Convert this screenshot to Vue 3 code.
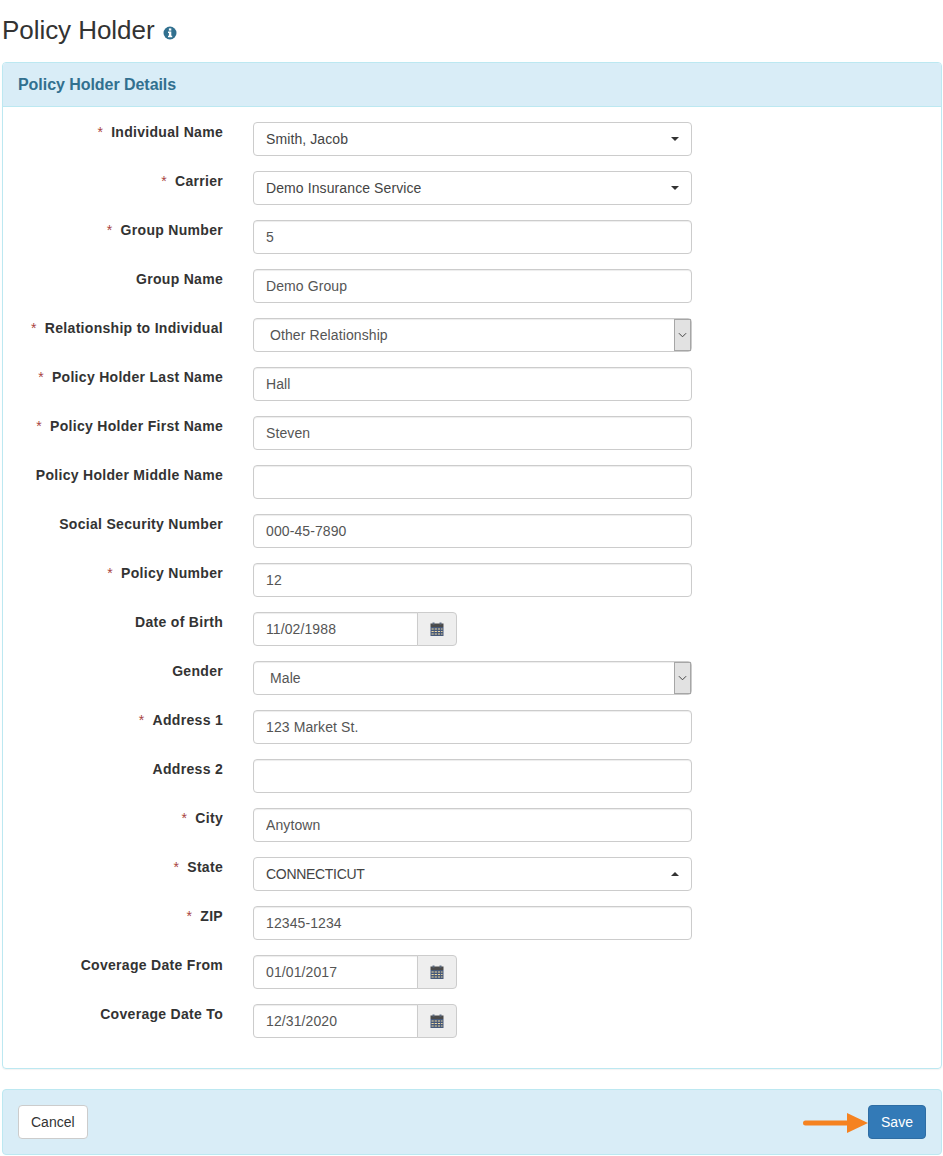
<template>
  <div class="page">
    <h3 class="title">
      Policy Holder
      <svg class="info" viewBox="0 0 14 14" width="14" height="14">
        <circle cx="7" cy="7" r="6.5" fill="#31708f" />
        <rect x="5.9" y="2.4" width="2.4" height="2.2" fill="#fff" />
        <path d="M5 5.6h3.3v4.2h.9v1.4H5V9.8h.9V7H5z" fill="#fff" />
      </svg>
    </h3>

    <div class="panel">
      <div class="panel-heading">Policy Holder Details</div>
      <div class="panel-body">
        <div v-for="field in fields" :key="field.label" class="form-row">
          <label class="form-label">
            <span v-if="field.required" class="req">*</span>{{ field.label }}
          </label>

          <div v-if="field.type === 'combo'" class="control combo">
            <span :class="{ caps: field.open }">{{ field.value }}</span>
            <i class="caret" :class="{ up: field.open }"></i>
          </div>

          <div v-else-if="field.type === 'select'" class="control native">
            <span>{{ field.value }}</span>
            <span class="native-btn">
              <svg viewBox="0 0 10 6" width="9" height="6">
                <path d="M1 1l4 4 4-4" fill="none" stroke="#444" stroke-width="1.1" />
              </svg>
            </span>
          </div>

          <div v-else-if="field.type === 'date'" class="date-group">
            <input class="control date-input" type="text" :value="field.value" readonly />
            <span class="addon">
              <svg viewBox="0 0 14 14" width="14" height="14">
                <rect x="0.5" y="1.5" width="13" height="3.5" fill="#4a4a4a" />
                <rect x="2.5" y="0.5" width="2" height="2" fill="#5a6a80" />
                <rect x="9.5" y="0.5" width="2" height="2" fill="#5a6a80" />
                <rect x="0.5" y="5" width="13" height="9" fill="#46597a" />
                <path d="M1.5 7h11M1.5 9.5h11M1.5 12h11" stroke="#f0d9a0" stroke-width="1.2" stroke-dasharray="2.2 1" />
              </svg>
            </span>
          </div>

          <input v-else class="control" type="text" :value="field.value" readonly />
        </div>
      </div>
    </div>

    <div class="footer">
      <button class="btn">Cancel</button>
      <div class="save-wrap">
        <svg class="arrow" viewBox="0 0 65 20" width="65" height="20">
          <rect x="0" y="7.5" width="46" height="5" rx="2.5" fill="#f58220" />
          <path d="M44 0l21 10-21 10z" fill="#f58220" />
        </svg>
        <button class="btn btn-primary">Save</button>
      </div>
    </div>
  </div>
</template>

<script setup>
const fields = [
  { label: 'Individual Name', value: 'Smith, Jacob', type: 'combo', required: true },
  { label: 'Carrier', value: 'Demo Insurance Service', type: 'combo', required: true },
  { label: 'Group Number', value: '5', required: true },
  { label: 'Group Name', value: 'Demo Group' },
  { label: 'Relationship to Individual', value: 'Other Relationship', type: 'select', required: true },
  { label: 'Policy Holder Last Name', value: 'Hall', required: true },
  { label: 'Policy Holder First Name', value: 'Steven', required: true },
  { label: 'Policy Holder Middle Name', value: '' },
  { label: 'Social Security Number', value: '000-45-7890' },
  { label: 'Policy Number', value: '12', required: true },
  { label: 'Date of Birth', value: '11/02/1988', type: 'date' },
  { label: 'Gender', value: 'Male', type: 'select' },
  { label: 'Address 1', value: '123 Market St.', required: true },
  { label: 'Address 2', value: '' },
  { label: 'City', value: 'Anytown', required: true },
  { label: 'State', value: 'CONNECTICUT', type: 'combo', open: true, required: true },
  { label: 'ZIP', value: '12345-1234', required: true },
  { label: 'Coverage Date From', value: '01/01/2017', type: 'date' },
  { label: 'Coverage Date To', value: '12/31/2020', type: 'date' },
]
</script>

<style>
body {
  background: #fff;
}
</style>

<style scoped>
.page {
  width: 943px;
  height: 1156px;
  overflow: hidden;
  padding: 0 1px 0 2px;
  box-sizing: border-box;
  font-family: "Liberation Sans", Arial, sans-serif;
  font-size: 14px;
  color: #333;
}

.title {
  margin: 0;
  height: 62px;
  padding: 15px 0 17px;
  box-sizing: border-box;
  font-size: 26px;
  line-height: 30px;
  font-weight: 400;
  letter-spacing: -0.05px;
  display: flex;
  align-items: center;
  gap: 8px;
}

.info {
  margin-top: 5px;
}

.panel {
  height: 1007px;
  box-sizing: border-box;
  border: 1px solid #bce8f1;
  border-radius: 4px;
  box-shadow: 0 1px 1px rgba(0, 0, 0, 0.05);
}

.panel-heading {
  height: 44px;
  box-sizing: border-box;
  padding: 0 15px;
  line-height: 43px;
  background: #d9edf7;
  border-bottom: 1px solid #bce8f1;
  border-radius: 3px 3px 0 0;
  color: #31708f;
  font-size: 16px;
  font-weight: 700;
  letter-spacing: -0.05px;
}

.panel-body {
  padding: 15px 0;
}

.form-row {
  display: flex;
  margin-bottom: 15px;
  height: 34px;
}

.form-label {
  width: 220px;
  flex: none;
  padding-top: 2px;
  text-align: right;
  font-weight: 700;
  letter-spacing: 0.3px;
  line-height: 16px;
  white-space: nowrap;
}

.req {
  color: #a94442;
  font-weight: 400;
  margin-right: 8px;
}

.control {
  width: 439px;
  height: 34px;
  margin-left: 30px;
  padding: 6px 12px;
  box-sizing: border-box;
  border: 1px solid #ccc;
  border-radius: 4px;
  background: #fff;
  box-shadow: inset 0 1px 1px rgba(0, 0, 0, 0.075);
  font-family: inherit;
  font-size: 14px;
  line-height: 20px;
  letter-spacing: 0.1px;
  color: #555;
  outline: none;
}

.combo {
  display: flex;
  align-items: center;
  justify-content: space-between;
  color: #444;
  box-shadow: none;
}

.caps {
  letter-spacing: -0.3px;
}

.caret {
  width: 0;
  height: 0;
  border-left: 4px solid transparent;
  border-right: 4px solid transparent;
  border-top: 4px solid #333;
}

.caret.up {
  border-top: 0;
  border-bottom: 4px solid #333;
}

.native {
  display: flex;
  align-items: center;
  justify-content: space-between;
  padding: 0 0 0 16px;
}

.native-btn {
  width: 17px;
  height: 32px;
  display: flex;
  align-items: center;
  justify-content: center;
  background: #e2e2e2;
  border: 1px solid #a6a6a6;
  box-sizing: border-box;
}

.date-group {
  display: flex;
}

.date-input {
  width: 165px;
  border-radius: 4px 0 0 4px;
}

.addon {
  width: 40px;
  height: 34px;
  margin-left: -1px;
  box-sizing: border-box;
  display: flex;
  align-items: center;
  justify-content: center;
  background: #eee;
  border: 1px solid #ccc;
  border-radius: 0 4px 4px 0;
}

.footer {
  margin-top: 20px;
  height: 66px;
  box-sizing: border-box;
  padding: 0 15px;
  display: flex;
  align-items: center;
  justify-content: space-between;
  background: #d9edf7;
  border: 1px solid #bce8f1;
  border-radius: 4px;
}

.save-wrap {
  display: flex;
  align-items: center;
}

.arrow {
  display: block;
  margin-top: 2px;
}

.btn {
  height: 34px;
  padding: 6px 12px;
  font-family: inherit;
  font-size: 14px;
  line-height: 20px;
  color: #333;
  background: #fff;
  border: 1px solid #ccc;
  border-radius: 4px;
}

.btn-primary {
  color: #fff;
  background: #337ab7;
  border-color: #2e6da4;
  width: 58px;
}
</style>
